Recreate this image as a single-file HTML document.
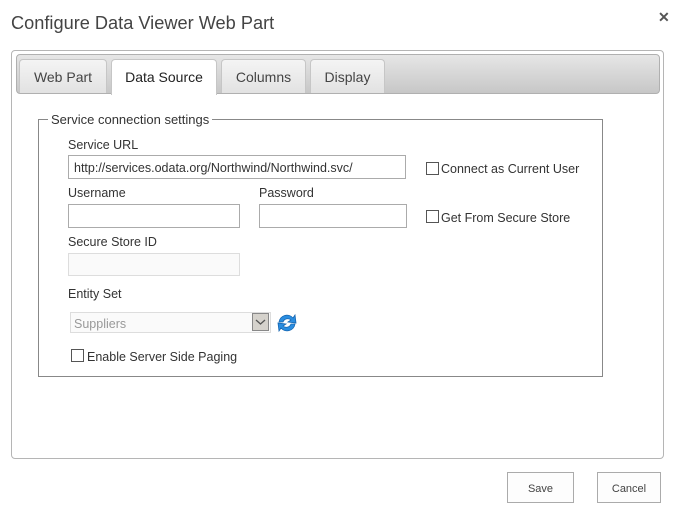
<!DOCTYPE html>
<html><head><style>
body{margin:0;width:684px;height:512px;background:#fff;font-family:"Liberation Sans",sans-serif;color:#444;position:relative;overflow:hidden}
.a{position:absolute}
.t{font-size:12.5px;color:#333;white-space:nowrap}
.inp{position:absolute;border:1px solid #ababab;background:#fff;box-sizing:border-box}
.cb{position:absolute;width:11px;height:11px;border:1px solid #555;background:#fff}
.tab{position:absolute;top:59px;height:34px;box-sizing:border-box;border:1px solid #c6c6c6;border-bottom:none;border-radius:4px 4px 0 0;background:linear-gradient(#f4f4f4,#e2e2e2);font-size:14px;color:#444;text-align:center;line-height:35px}
.btn{position:absolute;top:472px;height:31px;border:1px solid #ababab;background:#fdfdfd;font-size:11px;color:#444;text-align:center;line-height:32px;box-sizing:border-box}
</style></head><body>
<div class="a" style="left:11px;top:13px;font-size:18.2px;color:#444">Configure Data Viewer Web Part</div>
<div class="a" style="left:658px;top:9px;font-size:14px;color:#555;font-weight:bold">✕</div>
<div class="a" style="left:11px;top:50px;width:651px;height:407px;border:1px solid #b5b5b5;border-radius:4px"></div>
<div class="a" style="left:16px;top:54px;width:642px;height:38px;border:1px solid #b0b0b0;border-radius:4px;background:linear-gradient(#e6e6e6,#c7c7c7)"></div>
<div class="tab" style="left:19px;width:88px">Web Part</div>
<div class="tab" style="left:111px;width:106px;height:36px;background:#fff;color:#222">Data Source</div>
<div class="tab" style="left:221px;width:85px">Columns</div>
<div class="tab" style="left:310px;width:75px">Display</div>
<div class="a" style="left:38px;top:119px;width:563px;height:256px;border:1px solid #888"></div>
<div class="a t" style="left:48px;top:112px;background:#fff;padding:0 3px;font-size:13px">Service connection settings</div>
<div class="a t" style="left:68px;top:138px">Service URL</div>
<div class="inp" style="left:68px;top:155px;width:338px;height:24px"></div>
<div class="a t" style="left:74px;top:161px">http://services.odata.org/Northwind/Northwind.svc/</div>
<div class="cb" style="left:426px;top:162px"></div>
<div class="a t" style="left:441px;top:162px">Connect as Current User</div>
<div class="a t" style="left:68px;top:186px">Username</div>
<div class="a t" style="left:259px;top:186px">Password</div>
<div class="inp" style="left:68px;top:204px;width:172px;height:24px"></div>
<div class="inp" style="left:259px;top:204px;width:148px;height:24px"></div>
<div class="cb" style="left:426px;top:210px"></div>
<div class="a t" style="left:441px;top:211px">Get From Secure Store</div>
<div class="a t" style="left:68px;top:235px">Secure Store ID</div>
<div class="inp" style="left:68px;top:253px;width:172px;height:23px;border-color:#ddd;background:#fafafa"></div>
<div class="a t" style="left:68px;top:287px">Entity Set</div>
<div class="inp" style="left:70px;top:312px;width:201px;height:21px;border-color:#ddd;background:#fafafa"></div>
<div class="a t" style="left:74px;top:317px;color:#999">Suppliers</div>
<div class="a" style="left:252px;top:313px;width:17px;height:18px;border:1px solid #888;background:#d5d2cc;box-sizing:border-box"><svg width="15" height="16"><path d="M3 6 L7.5 10 L12 6" stroke="#555" fill="none" stroke-width="1.3"/></svg></div>
<svg class="a" style="left:275px;top:311px" width="24" height="24" viewBox="0 0 24 24"><path d="M4 11 A8 8 0 0 1 18 7 L20 4 L21 12 L13 11 L16 9 A5 5 0 0 0 8 11 Z" fill="#2a8de0" stroke="#1565b0" stroke-width="0.8"/><path d="M20 13 A8 8 0 0 1 6 17 L4 20 L3 12 L11 13 L8 15 A5 5 0 0 0 16 13 Z" fill="#2a8de0" stroke="#1565b0" stroke-width="0.8"/></svg>
<div class="cb" style="left:71px;top:349px"></div>
<div class="a t" style="left:87px;top:350px">Enable Server Side Paging</div>
<div class="btn" style="left:507px;width:67px">Save</div>
<div class="btn" style="left:597px;width:64px">Cancel</div>
</body></html>
